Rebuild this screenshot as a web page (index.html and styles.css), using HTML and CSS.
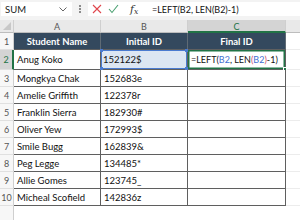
FILE: index.html
```html
<!DOCTYPE html>
<html>
<head>
<meta charset="utf-8">
<link rel="stylesheet" href="styles.css">
</head>
<body>
<div class="app">
  <div class="toolbar">
    <div class="namebox">
      <span class="nb-text">SUM</span>
      <svg class="chev" width="8" height="5" viewBox="0 0 8 5"><path d="M0.5 0.5 L4 4 L7.5 0.5" fill="none" stroke="#666" stroke-width="1"/></svg>
    </div>
    <div class="dots"><i></i><i></i><i></i></div>
    <div class="fbar">
      <div class="ficons">
        <svg width="10" height="10" viewBox="0 0 10 10"><path d="M1 1 L9 9 M9 1 L1 9" stroke="#e0464d" stroke-width="1.1" fill="none"/></svg>
        <svg width="11" height="10" viewBox="0 0 11 10"><path d="M1 5 L4 8.5 L10 1" stroke="#4aa071" stroke-width="1.1" fill="none"/></svg>
        <span class="fx"><i>f</i><span class="fxx">x</span></span>
      </div>
      <div class="ftext">=LEFT(B2, LEN(B2)-1)</div>
    </div>
  </div>
  <div class="sheet">
    <div class="corner"><svg width="8" height="8" viewBox="0 0 8 8"><path d="M8 0 L8 8 L0 8 Z" fill="#c8c8c8"/></svg></div>
    <div class="colh">A</div>
    <div class="colh">B</div>
    <div class="colh sel">C</div>
    <div class="colh last"></div>

    <div class="rowh">1</div>
    <div class="th">Student Name</div>
    <div class="th">Initial ID</div>
    <div class="th">Final ID</div>
    <div class="blank"></div>

    <div class="rowh sel">2</div>
    <div class="td">Anug Koko</div>
    <div class="td ref">152122$<b class="h tl"></b><b class="h tr"></b><b class="h bl"></b><b class="h br"></b></div>
    <div class="td edit">=LEFT(<span class="blue">B2</span>, LEN<span class="red">(</span><span class="blue">B2</span><span class="red">)</span>-1)<b class="gh"></b></div>
    <div class="blank"></div>

    <div class="rowh">3</div><div class="td">Mongkya Chak</div><div class="td">152683e</div><div class="td"></div><div class="blank"></div>
    <div class="rowh">4</div><div class="td">Amelie Griffith</div><div class="td">122378r</div><div class="td"></div><div class="blank"></div>
    <div class="rowh">5</div><div class="td">Franklin Sierra</div><div class="td">182930#</div><div class="td"></div><div class="blank"></div>
    <div class="rowh">6</div><div class="td">Oliver Yew</div><div class="td">172993$</div><div class="td"></div><div class="blank"></div>
    <div class="rowh">7</div><div class="td">Smile Bugg</div><div class="td">162839&amp;</div><div class="td"></div><div class="blank"></div>
    <div class="rowh">8</div><div class="td">Peg Legge</div><div class="td">134485*</div><div class="td"></div><div class="blank"></div>
    <div class="rowh">9</div><div class="td">Allie Gomes</div><div class="td">123745_</div><div class="td"></div><div class="blank"></div>
    <div class="rowh">10</div><div class="td">Micheal Scofield</div><div class="td">142836z</div><div class="td"></div><div class="blank"></div>

    <div class="rowh empty"></div><div class="blank wide"></div>
  </div>
</div>
</body>
</html>
```
FILE: styles.css
```css
* { box-sizing: border-box; }
html, body { margin: 0; padding: 0; }
body {
  width: 300px;
  height: 220px;
  overflow: hidden;
  background: #ffffff;
  font-family: Lato, "Liberation Sans", sans-serif;
  color: #111;
}
.app { width: 300px; height: 220px; display: flex; flex-direction: column; }

.toolbar {
  height: 20px;
  background: #f3f3f3;
  display: flex;
  align-items: flex-start;
  padding-top: 2px;
}
.namebox {
  margin-left: 1px;
  width: 71px;
  height: 14px;
  background: #fff;
  display: flex;
  align-items: center;
  justify-content: space-between;
  padding: 0 5px 0 4px;
  font-size: 9.5px;
  color: #222;
}
.chev { display: block; }
.dots {
  width: 16px;
  height: 14px;
  display: flex;
  flex-direction: column;
  align-items: center;
  justify-content: center;
  gap: 1.5px;
}
.dots i { display: block; width: 1.6px; height: 1.6px; background: #777; border-radius: 50%; }
.fbar {
  flex: 1;
  height: 14px;
  background: #fff;
  display: flex;
  align-items: center;
}
.ficons {
  width: 58px;
  display: flex;
  align-items: center;
  gap: 6px;
  padding-left: 4px;
}
.ficons svg { display: block; }
.fx {
  font-family: "DejaVu Serif", "Liberation Serif", serif;
  font-style: italic;
  font-size: 10.5px;
  color: #333;
  line-height: 1;
  margin-left: 5px;
}
.fx i { font-style: italic; }
.fxx { font-size: 7.5px; position: relative; top: 1px; }
.ftext {
  font-size: 9px;
  color: #111;
  padding-left: 6px;
}

.sheet {
  flex: 1;
  display: grid;
  grid-template-columns: 14px 87px 87px 98px 1fr;
  grid-template-rows: 13px 17px 20px repeat(8, 17px) 1fr;
  background: #fff;
}
.corner {
  background: #e9e9e9;
  border-right: 1px solid #cfcfcf;
  border-bottom: 1px solid #bdbdbd;
  display: flex;
  align-items: flex-end;
  justify-content: flex-end;
  padding: 0 2px 2px 0;
}
.corner svg { display: block; }
.colh {
  background: #e9e9e9;
  border-right: 1px solid #cfcfcf;
  border-bottom: 1px solid #bdbdbd;
  font-size: 9px;
  color: #555;
  display: flex;
  align-items: center;
  justify-content: center;
  padding-top: 1px;
}
.colh.sel {
  background: #d4d4d4;
  color: #217346;
  border-bottom: 2px solid #217346;
}
.colh.last { border-right: none; }
.rowh {
  background: #f7f7f7;
  border-right: 1px solid #cfcfcf;
  border-bottom: 1px solid #e0e0e0;
  font-size: 9px;
  color: #555;
  display: flex;
  align-items: center;
  justify-content: center;
}
.rowh.sel {
  background: #d4d4d4;
  color: #217346;
  border-right: 2px solid #217346;
}
.rowh.empty { border-bottom: none; }
.th {
  background: #34495e;
  color: #fff;
  font-weight: bold;
  font-size: 9.5px;
  border-right: 1px solid #5f6b75;
  border-bottom: 1px solid #5f5f5f;
  display: flex;
  align-items: center;
  justify-content: center;
}
.td {
  position: relative;
  border-right: 1px solid #5f5f5f;
  border-bottom: 1px solid #5f5f5f;
  font-size: 9.5px;
  display: flex;
  align-items: center;
  padding-left: 3px;
  white-space: nowrap;
}
.td.ref {
  background: #dce6f2;
  box-shadow: inset 0 0 0 1px #4a7bd0;
  padding-left: 2px;
}
.td.edit {
  box-shadow: inset 0 0 0 1.5px #217346;
  padding-left: 3px;
  font-size: 9px;
}
.blue { color: #3f6fd1; }
.red { color: #d24a6a; }
.h {
  position: absolute;
  width: 3px;
  height: 3px;
  background: #4a7bd0;
}
.h.tl { left: -1px; top: -1px; }
.h.tr { right: -1px; top: -1px; }
.h.bl { left: -1px; bottom: -1px; }
.h.br { right: -1px; bottom: -1px; }
.gh {
  position: absolute;
  right: -2px;
  bottom: -2px;
  width: 4px;
  height: 4px;
  background: #217346;
  border: 1px solid #fff;
}
.blank {
  border-bottom: 1px solid #ececec;
}
.blank.wide { grid-column: 2 / 6; border-bottom: none; }
```
